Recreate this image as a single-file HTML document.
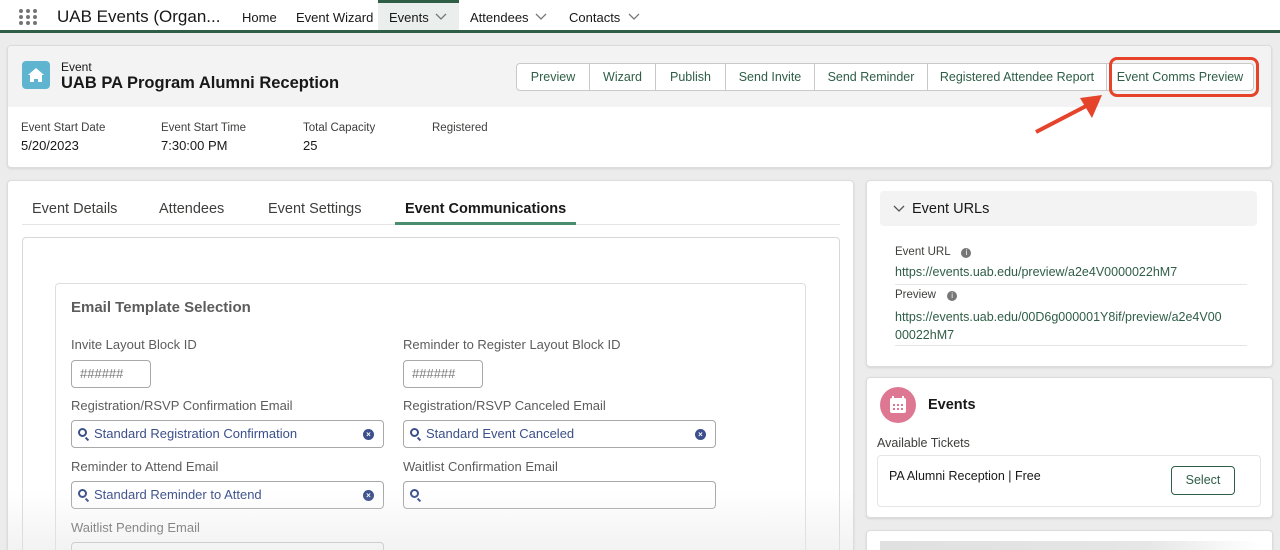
<!DOCTYPE html>
<html style="width:1280px;height:550px;overflow:hidden"><head><style>
*{box-sizing:border-box;margin:0;padding:0}
body{width:1280px;height:550px;overflow:hidden;background:#ececec;font-family:"Liberation Sans",sans-serif;color:#181818;position:relative}
.a{position:absolute}
.nav{left:0;top:0;width:1280px;height:33px;background:#fff;border-bottom:3px solid #2f5e46}
.nav span{position:absolute;top:10px;font-size:13px;color:#181818}
.card{background:#fff;border:1px solid #dcdcdc;border-radius:4px;box-shadow:0 1px 2px rgba(0,0,0,.1)}
.btn{position:absolute;top:63px;height:28px;border:1px solid #c9c9c9;background:#fff;font-size:12.5px;color:#2f5e46;text-align:center;line-height:26px}
.lbl{font-size:11.5px;color:#3e3e3c}
.val{font-size:13px}
.fl{font-size:13px;color:#5c5c5c}
.inp{position:absolute;border:1px solid #a8a8a8;border-radius:4px;height:28px;background:#fff;font-size:13px;color:#3b4f8a;line-height:26px;padding-left:22px}
.inp .q{position:absolute;left:6px;top:7px;width:9px;height:9px;border:2px solid #3b4f8a;border-radius:50%}
.inp .q:after{content:"";position:absolute;left:6px;top:7px;width:2px;height:4px;background:#3b4f8a;transform:rotate(-45deg)}
.inp .x{position:absolute;right:9px;top:8px;width:11px;height:11px;border-radius:50%;background:#3b4f8a;color:#fff;font-size:8px;line-height:11px;text-align:center;font-weight:bold}
.tab{position:absolute;top:201px;font-size:14.5px;color:#3e3e3c}
.chev{position:absolute;top:13px}
</style></head><body>
<div class="a nav">
 <div class="a" style="left:18px;top:8px;width:20px;height:18px">
  <svg width="20" height="18"><g fill="#747474"><circle cx="3" cy="3" r="2"/><circle cx="10" cy="3" r="2"/><circle cx="17" cy="3" r="2"/><circle cx="3" cy="9" r="2"/><circle cx="10" cy="9" r="2"/><circle cx="17" cy="9" r="2"/><circle cx="3" cy="15" r="2"/><circle cx="10" cy="15" r="2"/><circle cx="17" cy="15" r="2"/></g></svg>
 </div>
 <span style="left:57px;top:7px;font-size:17px">UAB Events (Organ...</span>
 <span style="left:242px">Home</span>
 <span style="left:296px">Event Wizard</span>
 <div class="a" style="left:378px;top:0;width:81px;height:30px;background:#eaeeec;border-top:3px solid #2f5e46"></div>
 <span style="left:389px">Events</span>
 <svg class="chev" style="left:435px" width="12" height="8"><path d="M1 1 L6 6 L11 1" fill="none" stroke="#777" stroke-width="1.3"/></svg>
 <span style="left:470px">Attendees</span>
 <svg class="chev" style="left:535px" width="12" height="8"><path d="M1 1 L6 6 L11 1" fill="none" stroke="#777" stroke-width="1.3"/></svg>
 <span style="left:569px">Contacts</span>
 <svg class="chev" style="left:628px" width="12" height="8"><path d="M1 1 L6 6 L11 1" fill="none" stroke="#777" stroke-width="1.3"/></svg>
</div>

<div class="a card" style="left:7px;top:45px;width:1265px;height:123px;overflow:hidden">
 <div class="a" style="left:0;top:0;width:1265px;height:61px;background:#f3f3f3"></div>
</div>
<div class="a" style="left:22px;top:61px;width:28px;height:28px;background:#5fb4cf;border-radius:4px">
 <svg width="28" height="28"><path d="M6 14 L14 7 L22 14 Z M8 14 H20 V21 H16 V18 H12 V21 H8 Z" fill="#fff"/></svg>
</div>
<div class="a" style="left:61px;top:60px;font-size:12px">Event</div>
<div class="a" style="left:61px;top:74px;font-size:16.5px;font-weight:bold">UAB PA Program Alumni Reception</div>
<div class="btn" style="left:516px;width:74px;border-radius:4px 0 0 4px">Preview</div>
<div class="btn" style="left:589px;width:67px">Wizard</div>
<div class="btn" style="left:655px;width:71px">Publish</div>
<div class="btn" style="left:725px;width:90px">Send Invite</div>
<div class="btn" style="left:814px;width:114px">Send Reminder</div>
<div class="btn" style="left:927px;width:180px">Registered Attendee Report</div>
<div class="btn" style="left:1106px;width:148px;border-radius:0 4px 4px 0">Event Comms Preview</div>
<div class="a" style="left:1109px;top:57px;width:150px;height:40px;border:3px solid #e5432a;border-radius:8px"></div>
<svg class="a" style="left:1030px;top:90px" width="80" height="45"><line x1="6" y1="42" x2="60" y2="14" stroke="#e5432a" stroke-width="4"/><path d="M72 5 L50 8 L62 28 Z" fill="#e5432a"/></svg>

<div class="a lbl" style="left:21px;top:122px">Event Start Date</div><div class="a val" style="left:21px;top:138px">5/20/2023</div>
<div class="a lbl" style="left:161px;top:122px">Event Start Time</div><div class="a val" style="left:161px;top:138px">7:30:00 PM</div>
<div class="a lbl" style="left:303px;top:122px">Total Capacity</div><div class="a val" style="left:303px;top:138px">25</div>
<div class="a lbl" style="left:432px;top:122px">Registered</div>

<div class="a card" style="left:7px;top:180px;width:847px;height:380px"></div>
<div class="tab" style="left:32px">Event Details</div>
<div class="tab" style="left:159px">Attendees</div>
<div class="tab" style="left:268px">Event Settings</div>
<div class="tab" style="left:405px;font-weight:bold;color:#181818">Event Communications</div>
<div class="a" style="left:22px;top:224px;width:818px;height:1px;background:#e5e5e5"></div>
<div class="a" style="left:395px;top:222px;width:181px;height:3px;background:#4a8c6d"></div>
<div class="a" style="left:22px;top:237px;width:818px;height:330px;border:1px solid #d8d8d8;border-radius:4px"></div>
<div class="a" style="left:55px;top:283px;width:751px;height:290px;border:1px solid #dedede;border-radius:4px"></div>
<div class="a" style="left:71px;top:299px;font-size:15px;font-weight:bold;color:#5c5c5c">Email Template Selection</div>
<div class="a fl" style="left:71px;top:337px">Invite Layout Block ID</div>
<div class="a fl" style="left:403px;top:337px">Reminder to Register Layout Block ID</div>
<div class="inp" style="left:71px;top:360px;width:80px;padding-left:8px;color:#777">######</div>
<div class="inp" style="left:403px;top:360px;width:80px;padding-left:8px;color:#777">######</div>
<div class="a fl" style="left:71px;top:398px">Registration/RSVP Confirmation Email</div>
<div class="a fl" style="left:403px;top:398px">Registration/RSVP Canceled Email</div>
<div class="inp" style="left:71px;top:420px;width:313px"><i class="q"></i>Standard Registration Confirmation<b class="x">×</b></div>
<div class="inp" style="left:403px;top:420px;width:313px"><i class="q"></i>Standard Event Canceled<b class="x">×</b></div>
<div class="a fl" style="left:71px;top:459px">Reminder to Attend Email</div>
<div class="a fl" style="left:403px;top:459px">Waitlist Confirmation Email</div>
<div class="inp" style="left:71px;top:481px;width:313px"><i class="q"></i>Standard Reminder to Attend<b class="x">×</b></div>
<div class="inp" style="left:403px;top:481px;width:313px"><i class="q"></i></div>
<div class="a fl" style="left:71px;top:520px">Waitlist Pending Email</div>
<div class="inp" style="left:71px;top:542px;width:313px;border-color:#bbb"></div>
<div class="a" style="left:8px;top:490px;width:845px;height:60px;background:linear-gradient(rgba(255,255,255,0),rgba(230,230,230,.5))"></div>

<div class="a card" style="left:866px;top:180px;width:407px;height:187px"></div>
<div class="a" style="left:880px;top:191px;width:377px;height:35px;background:#f3f3f3;border-radius:4px"></div>
<svg class="a" style="left:893px;top:205px" width="12" height="8"><path d="M1 1 L6 6 L11 1" fill="none" stroke="#555" stroke-width="1.3"/></svg>
<div class="a" style="left:912px;top:201px;font-size:14.5px;color:#181818">Event URLs</div>
<div class="a lbl" style="left:895px;top:246px">Event URL <span style="display:inline-block;width:10px;height:10px;border-radius:50%;background:#777;color:#fff;font-size:8px;line-height:10px;text-align:center;margin-left:8px">i</span></div>
<div class="a" style="left:895px;top:265px;font-size:12.5px;color:#2f5e46">https://events.uab.edu/preview/a2e4V0000022hM7</div>
<div class="a" style="left:895px;top:284px;width:352px;height:1px;background:#e5e5e5"></div>
<div class="a lbl" style="left:895px;top:289px">Preview <span style="display:inline-block;width:10px;height:10px;border-radius:50%;background:#777;color:#fff;font-size:8px;line-height:10px;text-align:center;margin-left:8px">i</span></div>
<div class="a" style="left:895px;top:308px;width:350px;font-size:12.5px;line-height:18px;color:#2f5e46">https://events.uab.edu/00D6g000001Y8if/preview/a2e4V00<br>00022hM7</div>
<div class="a" style="left:895px;top:345px;width:352px;height:1px;background:#e5e5e5"></div>

<div class="a card" style="left:866px;top:377px;width:407px;height:141px"></div>
<div class="a" style="left:880px;top:387px;width:36px;height:36px;border-radius:50%;background:#de7892">
 <svg width="36" height="36"><rect x="10" y="11" width="16" height="15" rx="2" fill="#fff"/><rect x="12" y="9" width="2" height="4" fill="#fff"/><rect x="22" y="9" width="2" height="4" fill="#fff"/><g fill="#de7892"><rect x="13" y="17" width="2" height="2"/><rect x="17" y="17" width="2" height="2"/><rect x="21" y="17" width="2" height="2"/><rect x="13" y="21" width="2" height="2"/><rect x="17" y="21" width="2" height="2"/><rect x="21" y="21" width="2" height="2"/></g></svg>
</div>
<div class="a" style="left:928px;top:397px;font-size:14.5px;font-weight:bold">Events</div>
<div class="a" style="left:877px;top:436px;font-size:12.5px;color:#3e3e3c">Available Tickets</div>
<div class="a" style="left:877px;top:455px;width:384px;height:52px;border:1px solid #e5e5e5;border-radius:4px"></div>
<div class="a" style="left:889px;top:469px;font-size:12.5px">PA Alumni Reception | Free</div>
<div class="a" style="left:1171px;top:466px;width:64px;height:29px;border:1px solid #2f5e46;border-radius:4px;font-size:12.5px;color:#2f5e46;text-align:center;line-height:27px">Select</div>

<div class="a card" style="left:866px;top:530px;width:407px;height:30px"></div>
<div class="a" style="left:880px;top:541px;width:380px;height:9px;background:linear-gradient(90deg,#e0e0e0,#e6e6e6 70%,#fff)"></div>
</body></html>
